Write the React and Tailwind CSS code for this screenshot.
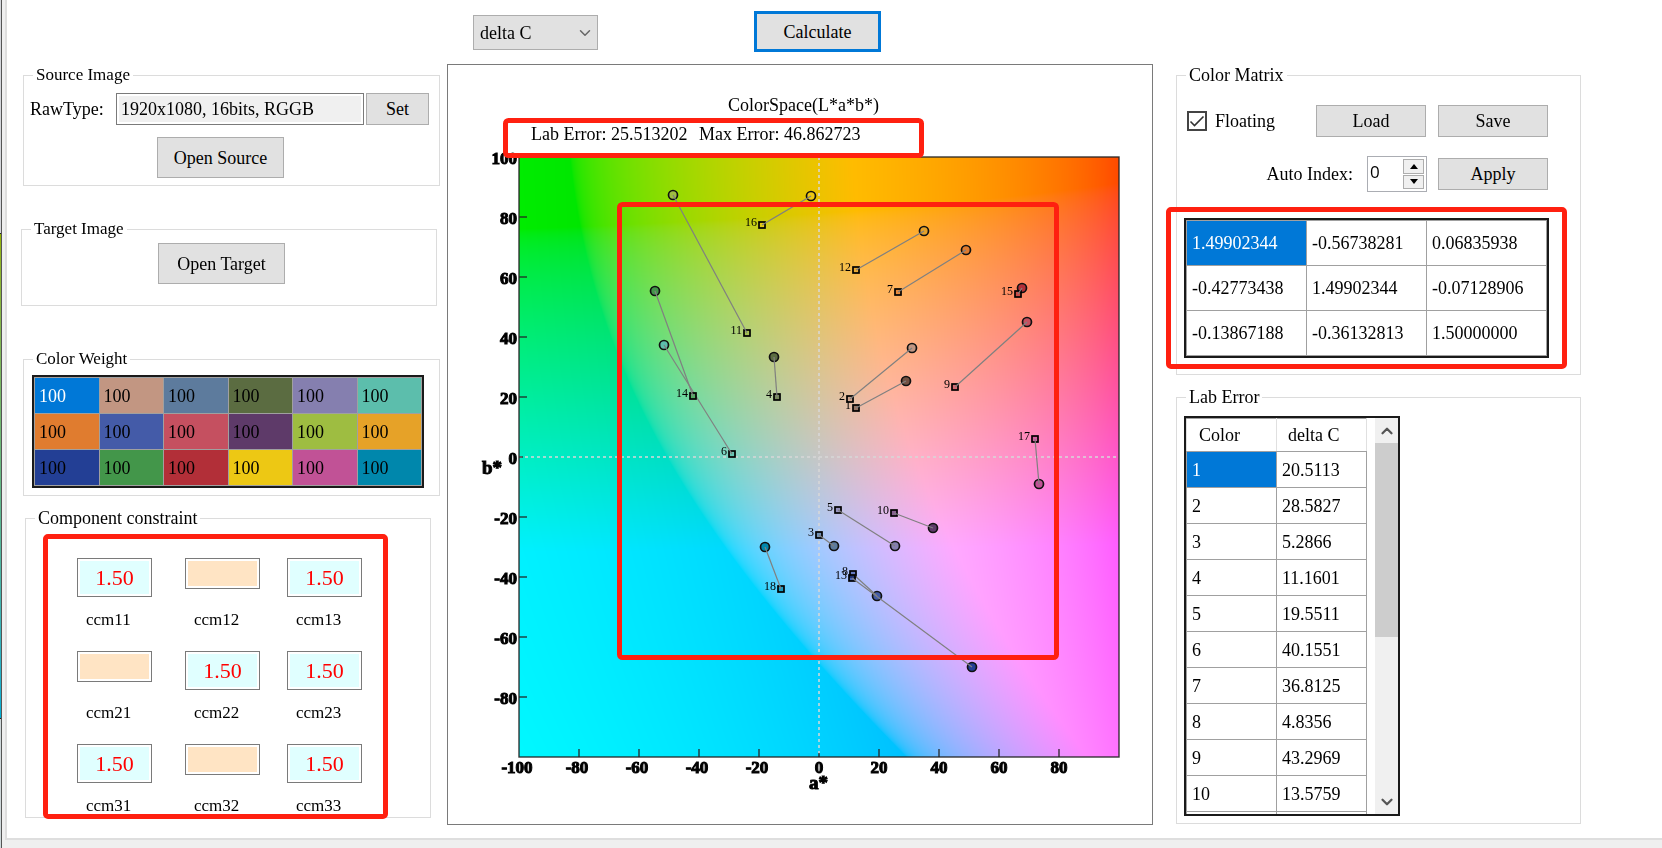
import { useEffect, useRef } from "react";
import { ChevronDown, ChevronUp } from "lucide-react";

const SERIF = 'font-["Liberation_Serif",serif]';

const patches = [
  { n: 1, fill: "#735244", sq: [408, 343], dot: [458, 316], err: "20.5113" },
  { n: 2, fill: "#c29682", sq: [402, 334], dot: [464, 283], err: "28.5827" },
  { n: 3, fill: "#5d7b9d", sq: [371, 470], dot: [386, 481], err: "5.2866" },
  { n: 4, fill: "#5b6c41", sq: [329, 332], dot: [326, 292], err: "11.1601" },
  { n: 5, fill: "#857faf", sq: [390, 445], dot: [447, 481], err: "19.5511" },
  { n: 6, fill: "#5cbeac", sq: [284, 389], dot: [216, 280], err: "40.1551" },
  { n: 7, fill: "#e07c2f", sq: [450, 227], dot: [518, 185], err: "36.8125" },
  { n: 8, fill: "#445ba8", sq: [405, 509], dot: [429, 531], err: "4.8356" },
  { n: 9, fill: "#c55060", sq: [507, 322], dot: [579, 257], err: "43.2969" },
  { n: 10, fill: "#5e3a69", sq: [446, 448], dot: [485, 463], err: "13.5759" },
  { n: 11, fill: "#9ebd41", sq: [299, 268], dot: [225, 130] },
  { n: 12, fill: "#e6a228", sq: [408, 205], dot: [476, 166] },
  { n: 13, fill: "#233f95", sq: [404, 513], dot: [524, 602] },
  { n: 14, fill: "#43964a", sq: [245, 331], dot: [207, 226] },
  { n: 15, fill: "#b22f38", sq: [570, 229], dot: [574, 223] },
  { n: 16, fill: "#edc814", sq: [314, 160], dot: [363, 131] },
  { n: 17, fill: "#c15296", sq: [587, 374], dot: [591, 419] },
  { n: 18, fill: "#0087ac", sq: [333, 524], dot: [317, 482] },
];

const matrix = [
  ["1.49902344", "-0.56738281", "0.06835938"],
  ["-0.42773438", "1.49902344", "-0.07128906"],
  ["-0.13867188", "-0.36132813", "1.50000000"],
];

const constraints = [
  ["11", "1.50"], ["12", ""], ["13", "1.50"],
  ["21", ""], ["22", "1.50"], ["23", "1.50"],
  ["31", "1.50"], ["32", ""], ["33", "1.50"],
];

const CHART_W = 704;
const CHART_H = 759;
const PLOT_X = 71;
const PLOT_Y = 92;
const PLOT = 600;

function labToRgb(L, a, b) {
  const inv = (t) => (t > 6 / 29 ? t * t * t : (t - 16 / 116) / 7.787);
  const fy = (L + 16) / 116;
  const X = 0.9505 * inv(fy + a / 500);
  const Y = inv(fy);
  const Z = 1.089 * inv(fy - b / 200);
  return [
    3.2406 * X - 1.5372 * Y - 0.4986 * Z,
    -0.9689 * X + 1.8758 * Y + 0.0415 * Z,
    0.0557 * X - 0.204 * Y + 1.057 * Z,
  ].map((v) => {
    const c = Math.min(1, Math.max(0, v));
    return 255 * (c <= 0.0031308 ? 12.92 * c : 1.055 * Math.pow(c, 1 / 2.4) - 0.055);
  });
}

function LabPlane() {
  const ref = useRef(null);
  useEffect(() => {
    const ctx = ref.current.getContext("2d");
    const img = ctx.createImageData(PLOT, PLOT);
    for (let y = 0; y < PLOT; y++) {
      for (let x = 0; x < PLOT; x++) {
        const [r, g, b] = labToRgb(80, x / 3 - 100, 100 - y / 3);
        const i = (y * PLOT + x) * 4;
        img.data[i] = r;
        img.data[i + 1] = g;
        img.data[i + 2] = b;
        img.data[i + 3] = 255;
      }
    }
    ctx.putImageData(img, PLOT_X, PLOT_Y);
  }, []);
  return (
    <canvas ref={ref} width={CHART_W} height={CHART_H} aria-hidden="true" className="col-start-1 row-start-1 w-full h-auto" />
  );
}

function Chart() {
  const cx = PLOT_X + 300;
  const cy = PLOT_Y + 300;
  const xt = [-100, -80, -60, -40, -20, 0, 20, 40, 60, 80];
  const yt = [100, 80, 60, 40, 20, 0, -20, -40, -60, -80];
  return (
    <div className="grid border border-[#7a7a7a] bg-white">
      <LabPlane />
      <svg viewBox={`0 0 ${CHART_W} ${CHART_H}`} className="col-start-1 row-start-1 w-full h-auto" role="img" aria-label="Lab color space chart">
        <g stroke="#d8d8d8" strokeWidth="1.5" strokeDasharray="3 3">
          <line x1={PLOT_X} x2={PLOT_X + PLOT} y1={cy} y2={cy} />
          <line x1={cx} x2={cx} y1={PLOT_Y} y2={PLOT_Y + PLOT} />
        </g>
        <g stroke="#222" strokeOpacity="0.9" strokeWidth="1.4" fill="none">
          <rect x={PLOT_X} y={PLOT_Y} width={PLOT} height={PLOT} />
          {xt.slice(1).map((t) => (
            <line key={t} x1={cx + 3 * t} x2={cx + 3 * t} y1={t === 0 ? 688 : 684} y2="692" />
          ))}
          {yt.slice(1).map((t) => (
            <line key={t} x1="71" x2={t === 0 ? 75 : 79} y1={cy - 3 * t} y2={cy - 3 * t} />
          ))}
        </g>
        <g fontSize="17" fontWeight="bold" stroke="#000" strokeWidth="1">
          {xt.map((t) => (
            <text key={t} x={cx + 3 * t - (t < 0 ? 2 : 0)} y="708" textAnchor="middle">{t}</text>
          ))}
          {yt.map((t) => (
            <text key={t} x="69" y={cy - 3 * t + 7} textAnchor="end">{t}</text>
          ))}
          <text x="34" y="409" fontSize="19">b*</text>
          <text x="361" y="724" fontSize="19">a*</text>
        </g>
        <g fontSize="18">
          <text x="280" y="46">ColorSpace(L*a*b*)</text>
          <text x="83" y="75">Lab Error: 25.513202</text>
          <text x="251" y="75">Max Error: 46.862723</text>
        </g>
        {patches.map((p) => (
          <g key={p.n}>
            <circle cx={p.dot[0]} cy={p.dot[1]} r="4.5" fill={p.fill} stroke="#111" strokeWidth="1.7" />
            <rect x={p.sq[0] - 3} y={p.sq[1] - 3} width="6" height="6" fill={p.fill} fillOpacity="0.7" stroke="#000" strokeWidth="1.7" />
            <line x1={p.sq[0]} y1={p.sq[1]} x2={p.dot[0]} y2={p.dot[1]} stroke="#808080" strokeWidth="1.2" />
            <text x={p.sq[0] - 5} y={p.sq[1] + 1} fontSize="12" textAnchor="end">{p.n}</text>
          </g>
        ))}
        <g fill="none" stroke="#ff2010" strokeWidth="5">
          <rect x="57.5" y="55.5" width="416" height="35" rx="3" />
          <rect x="171.5" y="139.5" width="437" height="453" rx="3" />
        </g>
      </svg>
    </div>
  );
}

function Group({ title, className, legend = "text-[18px]", children }) {
  return (
    <fieldset className={`relative min-w-0 border border-[#dcdcdc] ${className}`}>
      <legend className={`ml-[9px] px-[3px] leading-[22px] ${legend}`}>{title}</legend>
      {children}
    </fieldset>
  );
}

function Button({ className, children }) {
  return (
    <button type="button" className={`border border-[#adadad] bg-[#e1e1e1] leading-[22px] ${className}`}>
      {children}
    </button>
  );
}

export default function App() {
  return (
    <div className={`flex min-h-screen bg-[#efefef] text-[18px] leading-[22px] text-black ${SERIF}`}>
      <div className="flex w-[2px] shrink-0 flex-col border-r border-[#555]">
        <div className="h-[233px] bg-[#d4d6da]" />
        <div className="h-[486px] border-y border-[#222] bg-linear-to-b from-[#94b400] via-[#66b882] to-[#00aed4]" />
        <div className="flex-1 bg-[#cfd8da]" />
      </div>
      <div className="flex min-w-0 flex-1 flex-col pl-[3px]">
        <main className="grid flex-1 grid-cols-[440fr_706fr_509fr] items-start border-b-2 border-l-2 border-[#dedede] bg-white">
          <div className="pt-16">
            <Group title="Source Image" legend="text-[17px]" className="ml-4 mr-[7px] h-[122px]">
              <div className="mt-[7px] flex items-center pl-[6px] pr-[10px]">
                <label htmlFor="raw" className="w-[86px] shrink-0">RawType:</label>
                <input id="raw" readOnly defaultValue="1920x1080, 16bits, RGGB" className="h-8 min-w-0 flex-1 border border-[#7a7a7a] bg-[#f0f0f0] bg-clip-content p-[2px] indent-[2px]" />
                <Button className="ml-[2px] h-8 w-[63px]">Set</Button>
              </div>
              <Button className="ml-[133px] mt-3 h-[41px] w-[127px]">Open Source</Button>
            </Group>
            <Group title="Target Image" legend="text-[17px]" className="ml-[14px] mr-[10px] mt-8 h-[88px]">
              <Button className="ml-[136px] mt-[3px] h-[41px] w-[127px]">Open Target</Button>
            </Group>
            <Group title="Color Weight" legend="text-[17px]" className="ml-4 mr-[7px] mt-[42px] h-[148px]">
              <div className="ml-2 mr-[15px] mt-[5px] border-2 border-[#1a1a1a]">
                <table className="w-full table-fixed border-collapse">
                  <tbody>
                    {[0, 6, 12].map((s) => (
                      <tr key={s}>
                        {patches.slice(s, s + 6).map((p) => (
                          <td
                            key={p.n}
                            className={`h-9 border border-[#a0a0a0] pl-1 ${p.n === 1 ? "text-white" : ""}`}
                            style={{ backgroundColor: p.n === 1 ? "#0078d7" : p.fill }}
                          >
                            100
                          </td>
                        ))}
                      </tr>
                    ))}
                  </tbody>
                </table>
              </div>
            </Group>
            <Group title="Component constraint" className="ml-[18px] mr-4 mt-[11px] h-[311px]">
              <div className="ml-[51px] mt-[29px] grid grid-cols-[108px_102px_75px] gap-y-5">
                {constraints.map(([id, v]) => (
                  <div key={id} className="flex h-[73px] w-[75px] flex-col justify-between">
                    <input
                      id={`ccm${id}`}
                      defaultValue={v}
                      className={`w-full border border-[#7a7a7a] bg-clip-content p-[2px] text-center text-[22px] text-[#ff0000] ${v ? "h-[39px] bg-[#e0ffff]" : "h-[31px] bg-[#ffe4c4]"}`}
                    />
                    <label htmlFor={`ccm${id}`} className="ml-[9px] text-[17px]">ccm{id}</label>
                  </div>
                ))}
              </div>
              <div className="pointer-events-none absolute -bottom-[2px] left-[17px] h-[285px] w-[345px] rounded-[5px] border-[5px] border-[#ff2010]" />
            </Group>
          </div>

          <div>
            <div className="flex h-16 items-start">
              <div className="relative ml-[26px] mt-[15px]">
                <select aria-label="Error metric" className="h-[35px] w-[125px] appearance-none border border-[#adadad] bg-[#e1e1e1] pl-[6px]">
                  <option>delta C</option>
                </select>
                <ChevronDown size={18} strokeWidth={2} className="pointer-events-none absolute right-1 top-[9px] text-[#666]" />
              </div>
              <button type="button" className="ml-[156px] mt-[11px] h-[41px] w-[127px] border-[3px] border-[#0078d7] bg-[#e1e1e1]">Calculate</button>
            </div>
            <Chart />
          </div>

          <div className="pt-16">
            <Group title="Color Matrix" className="ml-[23px] mr-[81px] h-[311px]">
              <div className="mr-8 mt-[19px] flex items-center justify-end gap-3">
                <label className="ml-[10px] mr-auto flex items-center gap-2">
                  <span className="grid">
                    <input type="checkbox" defaultChecked className="col-start-1 row-start-1 size-5 appearance-none border-2 border-[#444] bg-white" />
                    <svg viewBox="0 0 20 20" className="pointer-events-none col-start-1 row-start-1 size-5" fill="none" stroke="#333" strokeWidth="1.6">
                      <path d="M3.5 10.5 L7.5 14.5 L16.5 5.5" />
                    </svg>
                  </span>
                  Floating
                </label>
                <Button className="h-8 w-[110px]">Load</Button>
                <Button className="h-8 w-[110px]">Save</Button>
              </div>
              <div className="mr-8 mt-[19px] flex items-center justify-end">
                <label htmlFor="idx" className="mr-[14px]">Auto Index:</label>
                <div className="mr-[11px] flex h-9 w-[60px] border border-[#abadb3] bg-white">
                  <input id="idx" defaultValue="0" className='h-7 w-[35px] pl-[2px] font-["Open_Sans",sans-serif] text-[17px]' />
                  <div className="my-[2px] flex w-[21px] flex-col gap-[1px]">
                    <button type="button" aria-label="Increase" className="flex flex-1 items-center justify-center border border-[#adadad] bg-[#f0f0f0]">
                      <svg viewBox="0 0 8 5" className="w-2" fill="#000"><path d="M0 5 L4 0 L8 5Z" /></svg>
                    </button>
                    <button type="button" aria-label="Decrease" className="flex flex-1 items-center justify-center border border-[#adadad] bg-[#f0f0f0]">
                      <svg viewBox="0 0 8 5" className="w-2" fill="#000"><path d="M0 0 L4 5 L8 0Z" /></svg>
                    </button>
                  </div>
                </div>
                <Button className="h-8 w-[110px]">Apply</Button>
              </div>
              <div className="relative ml-[7px] mr-[31px] mt-[26px] border-2 border-[#1a1a1a]">
                <table className="w-full table-fixed border-collapse">
                  <tbody>
                    {matrix.map((row, r) => (
                      <tr key={r}>
                        {row.map((v, c) => (
                          <td key={c} className={`h-[45px] border border-[#a0a0a0] pl-[5px] ${r + c === 0 ? "bg-[#0078d7] text-white" : ""}`}>{v}</td>
                        ))}
                      </tr>
                    ))}
                  </tbody>
                </table>
                <div className="pointer-events-none absolute -bottom-[13px] -left-5 -right-5 -top-[13px] rounded-[5px] border-[5px] border-[#ff2010]" />
              </div>
            </Group>
            <Group title="Lab Error" className="ml-[23px] mr-[81px] mt-[11px] h-[438px]">
              <div className="ml-[7px] mt-2 flex h-[400px] w-[216px] overflow-hidden border-2 border-[#1a1a1a]">
                <table className="mr-2 h-fit w-[181px] table-fixed border-collapse">
                  <thead>
                    <tr>
                      <th className="h-[33px] border border-[#e0e0e0] border-b-[#a0a0a0] border-t-[#a0a0a0] pl-3 text-left font-normal">Color</th>
                      <th className="h-[33px] border border-[#e0e0e0] border-b-[#a0a0a0] border-t-[#a0a0a0] pl-[11px] text-left font-normal">delta C</th>
                    </tr>
                  </thead>
                  <tbody>
                    {patches.slice(0, 11).map((p) => (
                      <tr key={p.n}>
                        <td className={`h-9 border border-[#a0a0a0] pl-[5px] ${p.n === 1 ? "bg-[#0078d7] text-white" : ""}`}>{p.err ? p.n : ""}</td>
                        <td className="h-9 border border-[#a0a0a0] pl-[5px]">{p.err}</td>
                      </tr>
                    ))}
                  </tbody>
                </table>
                <div className="flex flex-1 flex-col bg-[#f0f0f0]">
                  <button type="button" aria-label="Scroll up" className="flex h-[25px] items-center justify-center text-[#555]">
                    <ChevronUp size={18} strokeWidth={3} />
                  </button>
                  <div className="h-[194px] bg-[#cdcdcd]" />
                  <button type="button" aria-label="Scroll down" className="mt-auto flex h-[25px] items-center justify-center text-[#555]">
                    <ChevronDown size={18} strokeWidth={3} />
                  </button>
                </div>
              </div>
            </Group>
          </div>
        </main>
        <div className="h-2" />
      </div>
    </div>
  );
}
